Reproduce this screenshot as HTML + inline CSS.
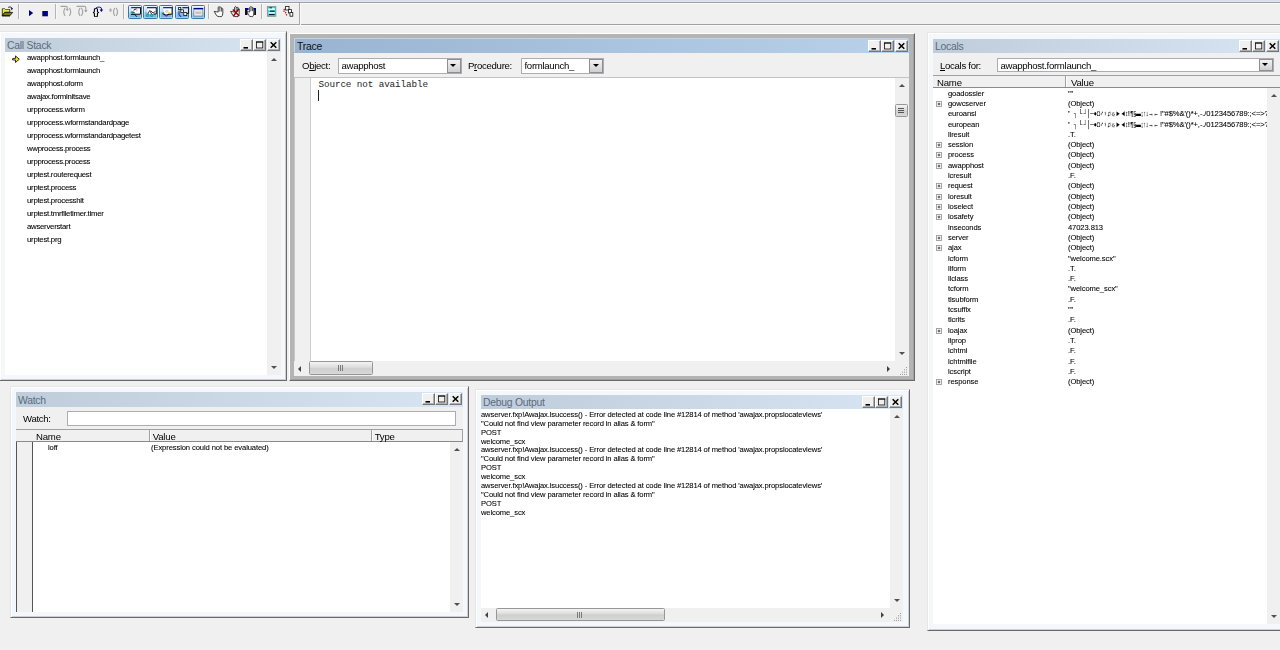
<!DOCTYPE html>
<html lang="en"><head><meta charset="utf-8"><title>Visual FoxPro Debugger</title>
<style>
html,body{margin:0;padding:0}
body{width:1280px;height:650px;overflow:hidden;background:#f0f0f0;position:relative;font-family:"Liberation Sans",sans-serif;font-size:8px;color:#000}
div,span{position:absolute;box-sizing:border-box;white-space:nowrap}
.win{background:#f4f7fc;border-left:1px solid #e6e6e6;border-top:1px solid #e6e6e6;border-right:1px solid #6a6a6a;border-bottom:1px solid #6a6a6a;box-shadow:inset 1px 1px 0 #fff,inset -1px -1px 0 rgba(160,160,160,.45)}
.win.act{background:#b4b4b4;border-left-color:#fff;border-top-color:#fff;box-shadow:inset -1px -1px 0 #a0a0a0}
.tb{height:14px;background:linear-gradient(90deg,#bfcddb,#d7e4f2);color:#5a6b7c;font-size:10.4px;line-height:14px;padding-left:2px;padding-top:1px;letter-spacing:-0.25px}
.act>.tb{background:linear-gradient(90deg,#99b4d1,#b9d1ea);color:#111;box-shadow:-1px -1px 0 #c3d3e6}
.cb{top:1px;width:13px;height:12px;background:#f0f0f0;border-left:1px solid #fff;border-top:1px solid #fff;border-right:1px solid #767676;border-bottom:1px solid #767676;box-shadow:inset -1px -1px 0 #b0b0b0}
.cb svg{position:absolute;left:0;top:0}
.white{background:#fff}
.sb{background:#f0f0f0}
.row{left:0;height:13px;line-height:13px;font-size:7.8px;letter-spacing:-0.27px}
.row,.lrow,.dl,.lbl,.combo,.hdr{will-change:transform}
.row,.lrow,.dl{-webkit-text-stroke:0.08px #000}
.lbl{font-size:9.6px;letter-spacing:-0.3px;line-height:12px}
.combo{background:#fff;border:1px solid #abadb3;font-size:9.6px;line-height:13px;letter-spacing:-0.3px;padding-left:2.5px}
.dd{right:0;top:0;bottom:0;width:14px;background:linear-gradient(#f2f2f2,#cfcfcf);border:1px solid #8e8e8e}
.dd:after{content:"";position:absolute;left:2.5px;top:50%;margin-top:-1.5px;border-left:3.5px solid transparent;border-right:3.5px solid transparent;border-top:3.5px solid #000}
.hdr{background:#f0f0f0;font-size:9.6px;line-height:13px;letter-spacing:-0.2px;border-bottom:1px solid #8a8a8a;border-top:1px solid #a0a0a0}
.hc{top:0;height:11px;border-left:1px solid #fff;border-right:1px solid #a0a0a0;padding-left:4px}
.thumb{background:linear-gradient(#f4f4f4,#dcdcdc 45%,#cfcfcf 55%,#d8d8d8);border:1px solid #979797;border-radius:1.5px}
.grip{left:50%;top:2.5px;width:5px;height:6px;margin-left:-3px;background:linear-gradient(90deg,#7a7a7a 0 1px,transparent 1px 2px,#7a7a7a 2px 3px,transparent 3px 4px,#7a7a7a 4px 5px)}
.au,.ad,.al,.ar{width:0;height:0}
.au{border-left:3px solid transparent;border-right:3px solid transparent;border-bottom:3px solid #505050}
.ad{border-left:3px solid transparent;border-right:3px solid transparent;border-top:3px solid #505050}
.al{border-top:3px solid transparent;border-bottom:3px solid transparent;border-right:3px solid #404040}
.ar{border-top:3px solid transparent;border-bottom:3px solid transparent;border-left:3px solid #404040}
.lrow{left:0;height:10.3px;line-height:10.3px;font-size:7.6px;letter-spacing:-0.1px}
.pms{position:absolute;left:3.4px}
.pm{left:4px;top:2px;width:6px;height:6px;border:1px solid #999;background:#fff}
.pm:before{content:"";position:absolute;left:1px;top:1.5px;width:2px;height:1px;background:#333}
.pm:after{content:"";position:absolute;left:1.5px;top:1px;width:1px;height:2px;background:#333}
.e1{transform:scaleX(.67);transform-origin:0 0}
.e2{letter-spacing:-0.1px}
.dl{left:0.3px;height:9px;line-height:9px;font-size:7.6px;letter-spacing:-0.12px}
.sep{width:1px;top:4px;height:15px;background:#b4b4b4;box-shadow:1px 0 0 #f8f8f8}
.pb{top:5px;width:14.3px;height:14px;border:1px solid #3a75a4;border-radius:1.5px;background:linear-gradient(#dceffa 0,#b6dbf2 48%,#84bfe5 56%,#6db1dd);box-shadow:inset 0 0 0 1px rgba(255,255,255,.35)}
.mw{left:3px;top:2px;width:9px;height:8px;background:#fff;border:1px solid #222;border-left-color:#888;border-top:1px solid #00008b;box-shadow:0 -1px 0 rgba(0,0,139,.35)}
</style></head>
<body>
<div style="left:0;top:0;width:1280px;height:2px;background:linear-gradient(#d6daec,#e6e8f2)"></div>
<div style="left:0;top:2px;width:1280px;height:1px;background:#a0a0a0"></div>
<div style="left:0;top:3px;width:1280px;height:1px;background:#fafafa"></div>
<div style="left:0;top:24px;width:1280px;height:1px;background:#a0a0a0"></div>
<div style="left:0;top:25px;width:1280px;height:1px;background:#fafafa"></div>
<div style="left:299px;top:3px;width:1px;height:22px;background:#a8a8a8"></div>
<div style="left:300px;top:3px;width:1px;height:23px;background:#fafafa"></div>
<div class="sep" style="left:18px"></div>
<div class="sep" style="left:55px"></div>
<div class="sep" style="left:123.2px"></div>
<div class="sep" style="left:208px"></div>
<div class="sep" style="left:261px"></div>
<svg style="position:absolute;left:0;top:3px;will-change:transform" width="300" height="21" viewBox="0 0 300 21">
<!-- open folder -->
<g stroke-linejoin="round">
<path d="M2.3 5.8 H4.8 L5.6 6.6 H9.8 V9.3 H4.8 L2.3 12.5 Z" fill="#ecec00" stroke="#111" stroke-width="0.8"/>
<path d="M2.9 6.5 H4.6 L5.4 7.3 H9.1" fill="none" stroke="#f8f8e0" stroke-width="0.6"/>
<path d="M4.8 9.4 H12.7 L9.9 12.7 H2.2 Z" fill="#7c7c00" stroke="#111" stroke-width="0.8"/>
<path d="M2.1 12.9 H10" stroke="#000" stroke-width="0.9"/>
<path d="M8.2 4.3 Q10.4 3.3 11.8 4.8 L12 6" fill="none" stroke="#111" stroke-width="0.9"/>
<path d="M10.6 5.4 L13 5.2 L11.9 7.3 Z" fill="#111"/>
</g>
<!-- play / stop -->
<path d="M29 7 L33.2 10.1 L29 13.2 Z" fill="#00008b"/>
<rect x="42.3" y="8" width="5.6" height="5.3" fill="#00008b"/>
<!-- step into / over / cursor (gray) -->
<g fill="none" stroke="#a4a4a4" stroke-width="1.15" stroke-linecap="round">
<path d="M61 3.4 H66 Q67.2 3.4 67.2 4.6 V6.4"/>
<path d="M64.9 5.3 Q62.7 9 64.9 12.5 M69.6 5.3 Q71.8 9 69.6 12.5"/>
<path d="M77 3.4 H84.4 Q85.8 3.4 85.8 4.8 V8.4"/>
<path d="M79.9 5.3 Q77.7 9 79.9 12.5 M81.6 5.3 Q83.8 9 81.6 12.5"/>
<path d="M114.6 5.3 Q112.4 9 114.6 12.5 M116.4 5.3 Q118.6 9 116.4 12.5"/>
<path d="M109.4 6.3 L111.6 8 M111.6 6.3 L109.4 8 M110.5 5.8 V8.5" stroke-width="0.8"/>
</g>
<path d="M65.6 6 L68.8 6 L67.2 8.3 Z M84 7 L87.6 7 L85.8 9.4 Z" fill="#a4a4a4"/>
<!-- step out (black + blue arrow) -->
<text x="92.8" y="12.4" font-family="Liberation Sans,sans-serif" font-size="8.6" font-weight="bold" fill="#000" letter-spacing="-0.3">{}</text>
<path d="M95.6 6.2 Q95.8 4.2 97.6 4.2 H99.8 Q101.5 4.2 101.5 6 V7" fill="none" stroke="#1414a4" stroke-width="1"/>
<path d="M99.6 6.6 L103.2 6.6 L101.4 8.9 Z" fill="#00008b"/>
<!-- hand 1 -->
<g fill="#fff" stroke="#111" stroke-width="0.8" stroke-linejoin="round">
<path d="M216.6 8.8 L214.2 8.4 L216.6 12.6 Q217.6 13.6 219.6 13.6 L221.6 13.6 Q222.8 12.6 222.8 10 V5.8 Q222.2 4.8 221.4 5.6 V4.6 Q220.6 3.6 219.8 4.6 V4 Q218.8 3 218.2 4.2 V9 Z"/>
</g>
<path d="M219.8 5 V8.6 M221.4 5.8 V8.6" stroke="#111" stroke-width="0.7" fill="none"/>
<!-- hand 2 with red X -->
<g fill="#fff" stroke="#111" stroke-width="0.8" stroke-linejoin="round">
<path d="M233 8.8 L230.6 8.4 L233 12.6 Q234 13.6 236 13.6 L238 13.6 Q239.2 12.6 239.2 10 V5.8 Q238.6 4.8 237.8 5.6 V4.6 Q237 3.6 236.2 4.6 V4 Q235.2 3 234.6 4.2 V9 Z"/>
</g>
<path d="M236.2 5 V8.6 M237.8 5.8 V8.6" stroke="#111" stroke-width="0.7" fill="none"/>
<path d="M232.8 6.4 L239.2 13 M238.8 6 L233.2 13.2" stroke="#960808" stroke-width="1.5" fill="none"/>
<!-- hands with blue bar -->
<rect x="245" y="5" width="3.6" height="2" fill="#00008b"/>
<rect x="252.4" y="5" width="3.6" height="2" fill="#00008b"/>
<rect x="245" y="7" width="2.4" height="5" fill="#111"/>
<rect x="254.2" y="7" width="1.8" height="5" fill="#111"/>
<g fill="#fff" stroke="#111" stroke-width="0.8" stroke-linejoin="round">
<path d="M248.6 8.8 L246.8 8.6 L248.8 12.4 Q249.6 13.6 251.2 13.6 L252.6 13.6 Q253.8 12.6 253.8 10 V5.6 Q253.2 4.6 252.5 5.4 V4.4 Q251.7 3.4 251 4.4 V4 Q250.2 3.2 249.7 4.4 V9 Z"/>
</g>
<path d="M251 4.8 V8.2 M252.5 5.6 V8.2" stroke="#111" stroke-width="0.7" fill="none"/>
<!-- cyan list icon -->
<rect x="267.3" y="3.5" width="8.6" height="9.8" fill="#00e0e0" stroke="#888" stroke-width="0.7"/>
<rect x="268.4" y="5.2" width="6.4" height="2.2" fill="#fff"/>
<rect x="268.4" y="9.2" width="6.4" height="1.4" fill="#fff"/>
<rect x="269.4" y="4.4" width="2.6" height="0.9" fill="#111"/>
<rect x="270" y="7.6" width="4.6" height="1.1" fill="#111"/>
<rect x="269" y="11" width="5.6" height="1" fill="#111"/>
<!-- assert icon -->
<g fill="#fff" stroke="#111" stroke-width="0.8">
<rect x="285.6" y="3.4" width="3.4" height="3.6"/>
<rect x="288.4" y="6.6" width="3" height="3.4"/>
<rect x="290" y="9.6" width="2.8" height="3.6" />
</g>
<path d="M284.6 5.8 L283.4 7.6 L285.6 9.4 L286 11 L287 12.6" fill="none" stroke="#b01818" stroke-width="1.2" stroke-dasharray="1.4 0.9"/>
</svg>
<div class="pb" style="left:127.7px"></div>
<div class="pb" style="left:143.4px"></div>
<div class="pb" style="left:159.2px"></div>
<div class="pb" style="left:175px"></div>
<div class="pb" style="left:190.9px"></div>
<svg style="position:absolute;left:0;top:0" width="210" height="24" viewBox="0 0 210 24">
<!-- btn1: locals-like window with figure -->
<rect x="131.6" y="8" width="8.9" height="6" fill="#fff"/><path d="M131.2 7.7 H141" stroke="#00008b" stroke-width="1.1"/><path d="M140.5 8 V14.2 H134" stroke="#111" stroke-width="1" fill="none"/>
<path d="M133.6 10.2 L136.4 8.8 M131 14.4 H135 L136.6 16.8 M131.4 12 L134.6 12.6" stroke="#111" stroke-width="1" fill="none"/><rect x="131.6" y="11.6" width="2.2" height="2.2" fill="#008c8c"/><path d="M135.4 9.4 L137.4 9.8 L136.4 11.6" fill="none" stroke="#999" stroke-width="0.6"/>
<!-- btn2: watch window with glasses -->
<rect x="147.4" y="8" width="9" height="6" fill="#fff"/><path d="M147 7.7 H156.8" stroke="#00008b" stroke-width="1.1"/><path d="M156.3 8 V14 H153.5" stroke="#111" stroke-width="1" fill="none"/>
<path d="M147.4 14.6 L149.8 10.4 L151.8 14.6 M151 11 L153 13 L155.4 11.4" stroke="#222" stroke-width="0.9" fill="none"/><circle cx="147.5" cy="15.4" r="1.2" fill="#00d8d8" stroke="#066" stroke-width="0.4"/><circle cx="151.6" cy="15.4" r="1.2" fill="#00d8d8" stroke="#066" stroke-width="0.4"/>
<!-- btn3: window with colored dots -->
<rect x="163.6" y="8" width="8.6" height="6" fill="#fff"/><path d="M163.2 7.7 H172.6" stroke="#00008b" stroke-width="1.1"/><path d="M172.1 8 V14.2 H169" stroke="#111" stroke-width="1" fill="none"/>
<path d="M162.6 13.6 L166.4 15.8 L170 13.2" stroke="#111" stroke-width="1.1" fill="none"/><circle cx="163.4" cy="13.2" r="1" fill="#008c6c"/><circle cx="166.4" cy="15.6" r="1.1" fill="#f000f0"/><circle cx="169.2" cy="12.9" r="1" fill="#e6e600"/><circle cx="166.8" cy="11.2" r="1.3" fill="#e4e4e4" stroke="#aaa" stroke-width="0.4"/>
<!-- btn4: cascade -->
<rect x="182.6" y="8" width="6" height="5.2" fill="#d8ecf8"/><path d="M182.4 7.7 H189" stroke="#00008b" stroke-width="1.1"/><path d="M188.6 8 V13.4 H186.6" stroke="#111" stroke-width="1" fill="none"/>
<g fill="#fff" stroke="#111" stroke-width="0.8"><rect x="178.6" y="7.4" width="2.2" height="2.2"/><rect x="180.8" y="9.8" width="2.6" height="2.6"/><rect x="183.8" y="12.6" width="3" height="3"/></g>
<path d="M179 10.6 V14.4 Q179.4 16.2 181.2 16.6" stroke="#0808a8" stroke-width="0.9" fill="none"/>
<!-- btn5: output window -->
<rect x="193.8" y="9" width="9" height="7" fill="#e9e9e9" stroke="#8c8c8c" stroke-width="0.8"/><path d="M193.6 8.6 H203.2" stroke="#00008b" stroke-width="1.3"/><rect x="195.4" y="11.6" width="5.8" height="2.4" fill="#c4c4c4"/>
</svg>
<div class="win" style="left:-1px;top:31px;width:288px;height:350px"><div class="tb" style="left:5px;top:6px;width:276px;height:14px;line-height:14px">Call Stack<div class="cb" style="left:235px"><svg width="11" height="10" viewBox="0 0 11 10"><rect x="2.5" y="7" width="4.5" height="1.6" fill="#000"/></svg></div><div class="cb" style="left:248px"><svg width="11" height="10" viewBox="0 0 11 10"><rect x="2.4" y="2" width="6.4" height="6" fill="none" stroke="#111" stroke-width="0.85"/><rect x="2" y="1.5" width="7.2" height="1" fill="#111"/></svg></div><div class="cb" style="left:262px"><svg width="11" height="10" viewBox="0 0 11 10"><path d="M2.7 2.2 L8.3 7.8 M8.3 2.2 L2.7 7.8" stroke="#000" stroke-width="1.5" fill="none"/></svg></div></div><div class="white" style="left:5px;top:20px;width:262px;height:323px"><svg style="position:absolute;left:6.5px;top:2.5px" width="8" height="8" viewBox="0 0 8 8"><path d="M0.7 3.4 H3.5 V0.9 L7.3 4.2 L3.5 7.5 V5 H0.7 Z" fill="#f0e800" stroke="#111" stroke-width="0.85" stroke-linejoin="round"/></svg><div class="row" style="left:22px;top:-1.2px">awapphost.formlaunch_</div><div class="row" style="left:22px;top:11.8px">awapphost.formlaunch</div><div class="row" style="left:22px;top:24.8px">awapphost.oform</div><div class="row" style="left:22px;top:37.8px">awajax.forminitsave</div><div class="row" style="left:22px;top:50.8px">urpprocess.wform</div><div class="row" style="left:22px;top:63.8px">urpprocess.wformstandardpage</div><div class="row" style="left:22px;top:76.8px">urpprocess.wformstandardpagetest</div><div class="row" style="left:22px;top:89.8px">wwprocess.process</div><div class="row" style="left:22px;top:102.8px">urpprocess.process</div><div class="row" style="left:22px;top:115.8px">urptest.routerequest</div><div class="row" style="left:22px;top:128.8px">urptest.process</div><div class="row" style="left:22px;top:141.8px">urptest.processhit</div><div class="row" style="left:22px;top:154.8px">urptest.tmrfiletimer.timer</div><div class="row" style="left:22px;top:167.8px">awserverstart</div><div class="row" style="left:22px;top:180.8px">urptest.prg</div></div><div class="sb" style="left:267px;top:20px;width:14px;height:323px"><div class="au" style="left:4px;top:6px"></div><div class="ad" style="left:4px;bottom:6px"></div></div></div>
<div class="win act" style="left:289px;top:33px;width:626px;height:348px"><div class="tb" style="left:5px;top:5px;width:614px;height:14px;line-height:14px">Trace<div class="cb" style="left:573px"><svg width="11" height="10" viewBox="0 0 11 10"><rect x="2.5" y="7" width="4.5" height="1.6" fill="#000"/></svg></div><div class="cb" style="left:586px"><svg width="11" height="10" viewBox="0 0 11 10"><rect x="2.4" y="2" width="6.4" height="6" fill="none" stroke="#111" stroke-width="0.85"/><rect x="2" y="1.5" width="7.2" height="1" fill="#111"/></svg></div><div class="cb" style="left:600px"><svg width="11" height="10" viewBox="0 0 11 10"><path d="M2.7 2.2 L8.3 7.8 M8.3 2.2 L2.7 7.8" stroke="#000" stroke-width="1.5" fill="none"/></svg></div></div><div style="left:4px;top:19px;width:615px;height:323px;background:#f0f0f0"></div><div class="lbl" style="left:11.5px;top:26px">O<u>b</u>ject:</div><div class="combo" style="left:48px;top:24px;width:123.5px;height:15.5px">awapphost<div class="dd"></div></div><div class="lbl" style="left:178px;top:26px">P<u>r</u>ocedure:</div><div class="combo" style="left:231px;top:24px;width:83px;height:15.5px">formlaunch_<div class="dd"></div></div><div style="left:4px;top:43px;width:615px;height:1px;background:#c4c4c4"></div><div style="left:4px;top:43px;width:1px;height:284px;background:#c6c6c6"></div><div class="white" style="left:20px;top:44px;width:585px;height:283px;border-left:1px solid #cdcdcd"><div style="left:7.5px;top:1.5px;font-family:'Liberation Mono',monospace;font-size:9.3px;line-height:10px;letter-spacing:-0.11px;color:#262626">Source not available</div><div style="left:7px;top:11.5px;width:1px;height:11px;background:#222"></div></div><div class="sb" style="left:605px;top:44px;width:14px;height:283px"><div class="au" style="left:4px;top:6px"></div><div class="ad" style="left:4px;bottom:6px"></div><div class="thumb" style="left:0;top:26px;width:12.5px;height:12.5px"><div style="left:2px;top:2.5px;width:6px;height:5px;background:linear-gradient(#555 0 1px,transparent 1px 2px,#555 2px 3px,transparent 3px 4px,#555 4px 5px)"></div></div></div><div class="sb" style="left:4px;top:327px;width:615px;height:15px"><div class="al" style="left:4px;top:4.5px"></div><div class="ar" style="right:19px;top:4.5px"></div><div class="thumb" style="left:15px;top:0;width:63.5px;height:14px"><div class="grip"></div></div><svg style="position:absolute;right:1px;bottom:1px" width="8" height="8" viewBox="0 0 8 8"><g fill="#999"><rect x="6" y="0" width="1" height="1"/><rect x="4" y="2.3" width="1" height="1"/><rect x="6" y="2.3" width="1" height="1"/><rect x="2" y="4.6" width="1" height="1"/><rect x="4" y="4.6" width="1" height="1"/><rect x="6" y="4.6" width="1" height="1"/><rect x="0" y="6.9" width="1" height="1"/><rect x="2" y="6.9" width="1" height="1"/><rect x="4" y="6.9" width="1" height="1"/><rect x="6" y="6.9" width="1" height="1"/></g></svg></div></div>
<div class="win" style="left:927px;top:32px;width:373px;height:599px"><div class="tb" style="left:5px;top:6px;width:347px;height:14px;line-height:14px">Locals<div class="cb" style="left:306px"><svg width="11" height="10" viewBox="0 0 11 10"><rect x="2.5" y="7" width="4.5" height="1.6" fill="#000"/></svg></div><div class="cb" style="left:319px"><svg width="11" height="10" viewBox="0 0 11 10"><rect x="2.4" y="2" width="6.4" height="6" fill="none" stroke="#111" stroke-width="0.85"/><rect x="2" y="1.5" width="7.2" height="1" fill="#111"/></svg></div><div class="cb" style="left:333px"><svg width="11" height="10" viewBox="0 0 11 10"><path d="M2.7 2.2 L8.3 7.8 M8.3 2.2 L2.7 7.8" stroke="#000" stroke-width="1.5" fill="none"/></svg></div></div><div style="left:5px;top:20px;width:360px;height:36px;background:#f0f0f0"></div><div class="lbl" style="left:12px;top:27px"><u>L</u>ocals for:</div><div class="combo" style="left:69px;top:25px;width:276.5px;height:13.5px">awapphost.formlaunch_<div class="dd"></div></div><div class="hdr" style="left:5px;top:42px;width:360px;height:13px"><div class="hc" style="left:0;width:133px;border-left:0">Name</div><div class="hc" style="left:133px;width:300px">Value</div></div><div class="white" style="left:5px;top:55px;width:334px;height:536px;overflow:hidden"><div class="lrow" style="left:14.5px;top:0.6px">goadossier</div><div class="lrow" style="left:135px;top:0.6px">&quot;&quot;</div><svg class="pms" style="top:12.71px" width="7" height="7" viewBox="0 0 7 7"><rect x="0.5" y="0.5" width="5" height="5" fill="#fff" stroke="#9c9c9c" stroke-width="0.9"/><path d="M1.6 3 H4.4 M3 1.6 V4.4" stroke="#333" stroke-width="0.9"/></svg><div class="lrow" style="left:14.5px;top:10.91px">gowcserver</div><div class="lrow" style="left:135px;top:10.91px">(Object)</div><div class="lrow" style="left:14.5px;top:21.22px">euroansi</div><div class="lrow e1" style="left:135px;top:21.22px">"&nbsp; &nbsp;┐ └ ┘│─●◘♂♀♫☼►◄↕‼¶§▬↨↑↓→←</div><div class="lrow e2" style="left:227px;top:21.22px">!"#$%&amp;'()*+,-./0123456789:;&lt;=&gt;?</div><div class="lrow" style="left:14.5px;top:31.53px">european</div><div class="lrow e1" style="left:135px;top:31.53px">"&nbsp; &nbsp;┐ └ ┘│─●◘♂♀♫☼►◄↕‼¶§▬↨↑↓→←</div><div class="lrow e2" style="left:227px;top:31.53px">!"#$%&amp;'()*+,-./0123456789:;&lt;=&gt;?</div><div class="lrow" style="left:14.5px;top:41.84px">llresult</div><div class="lrow" style="left:135px;top:41.84px">.T.</div><svg class="pms" style="top:53.95px" width="7" height="7" viewBox="0 0 7 7"><rect x="0.5" y="0.5" width="5" height="5" fill="#fff" stroke="#9c9c9c" stroke-width="0.9"/><path d="M1.6 3 H4.4 M3 1.6 V4.4" stroke="#333" stroke-width="0.9"/></svg><div class="lrow" style="left:14.5px;top:52.15px">session</div><div class="lrow" style="left:135px;top:52.15px">(Object)</div><svg class="pms" style="top:64.26px" width="7" height="7" viewBox="0 0 7 7"><rect x="0.5" y="0.5" width="5" height="5" fill="#fff" stroke="#9c9c9c" stroke-width="0.9"/><path d="M1.6 3 H4.4 M3 1.6 V4.4" stroke="#333" stroke-width="0.9"/></svg><div class="lrow" style="left:14.5px;top:62.46px">process</div><div class="lrow" style="left:135px;top:62.46px">(Object)</div><svg class="pms" style="top:74.57px" width="7" height="7" viewBox="0 0 7 7"><rect x="0.5" y="0.5" width="5" height="5" fill="#fff" stroke="#9c9c9c" stroke-width="0.9"/><path d="M1.6 3 H4.4 M3 1.6 V4.4" stroke="#333" stroke-width="0.9"/></svg><div class="lrow" style="left:14.5px;top:72.77px">awapphost</div><div class="lrow" style="left:135px;top:72.77px">(Object)</div><div class="lrow" style="left:14.5px;top:83.08px">lcresult</div><div class="lrow" style="left:135px;top:83.08px">.F.</div><svg class="pms" style="top:95.19px" width="7" height="7" viewBox="0 0 7 7"><rect x="0.5" y="0.5" width="5" height="5" fill="#fff" stroke="#9c9c9c" stroke-width="0.9"/><path d="M1.6 3 H4.4 M3 1.6 V4.4" stroke="#333" stroke-width="0.9"/></svg><div class="lrow" style="left:14.5px;top:93.39px">request</div><div class="lrow" style="left:135px;top:93.39px">(Object)</div><svg class="pms" style="top:105.5px" width="7" height="7" viewBox="0 0 7 7"><rect x="0.5" y="0.5" width="5" height="5" fill="#fff" stroke="#9c9c9c" stroke-width="0.9"/><path d="M1.6 3 H4.4 M3 1.6 V4.4" stroke="#333" stroke-width="0.9"/></svg><div class="lrow" style="left:14.5px;top:103.7px">loresult</div><div class="lrow" style="left:135px;top:103.7px">(Object)</div><svg class="pms" style="top:115.81px" width="7" height="7" viewBox="0 0 7 7"><rect x="0.5" y="0.5" width="5" height="5" fill="#fff" stroke="#9c9c9c" stroke-width="0.9"/><path d="M1.6 3 H4.4 M3 1.6 V4.4" stroke="#333" stroke-width="0.9"/></svg><div class="lrow" style="left:14.5px;top:114.01px">loselect</div><div class="lrow" style="left:135px;top:114.01px">(Object)</div><svg class="pms" style="top:126.12px" width="7" height="7" viewBox="0 0 7 7"><rect x="0.5" y="0.5" width="5" height="5" fill="#fff" stroke="#9c9c9c" stroke-width="0.9"/><path d="M1.6 3 H4.4 M3 1.6 V4.4" stroke="#333" stroke-width="0.9"/></svg><div class="lrow" style="left:14.5px;top:124.32px">losafety</div><div class="lrow" style="left:135px;top:124.32px">(Object)</div><div class="lrow" style="left:14.5px;top:134.63px">lnseconds</div><div class="lrow" style="left:135px;top:134.63px">47023.813</div><svg class="pms" style="top:146.74px" width="7" height="7" viewBox="0 0 7 7"><rect x="0.5" y="0.5" width="5" height="5" fill="#fff" stroke="#9c9c9c" stroke-width="0.9"/><path d="M1.6 3 H4.4 M3 1.6 V4.4" stroke="#333" stroke-width="0.9"/></svg><div class="lrow" style="left:14.5px;top:144.94px">server</div><div class="lrow" style="left:135px;top:144.94px">(Object)</div><svg class="pms" style="top:157.05px" width="7" height="7" viewBox="0 0 7 7"><rect x="0.5" y="0.5" width="5" height="5" fill="#fff" stroke="#9c9c9c" stroke-width="0.9"/><path d="M1.6 3 H4.4 M3 1.6 V4.4" stroke="#333" stroke-width="0.9"/></svg><div class="lrow" style="left:14.5px;top:155.25px">ajax</div><div class="lrow" style="left:135px;top:155.25px">(Object)</div><div class="lrow" style="left:14.5px;top:165.56px">lcform</div><div class="lrow" style="left:135px;top:165.56px">&quot;welcome.scx&quot;</div><div class="lrow" style="left:14.5px;top:175.87px">llform</div><div class="lrow" style="left:135px;top:175.87px">.T.</div><div class="lrow" style="left:14.5px;top:186.18px">llclass</div><div class="lrow" style="left:135px;top:186.18px">.F.</div><div class="lrow" style="left:14.5px;top:196.49px">tcform</div><div class="lrow" style="left:135px;top:196.49px">&quot;welcome_scx&quot;</div><div class="lrow" style="left:14.5px;top:206.8px">tlsubform</div><div class="lrow" style="left:135px;top:206.8px">.F.</div><div class="lrow" style="left:14.5px;top:217.11px">tcsuffix</div><div class="lrow" style="left:135px;top:217.11px">&quot;&quot;</div><div class="lrow" style="left:14.5px;top:227.42px">tlcrits</div><div class="lrow" style="left:135px;top:227.42px">.F.</div><svg class="pms" style="top:239.53px" width="7" height="7" viewBox="0 0 7 7"><rect x="0.5" y="0.5" width="5" height="5" fill="#fff" stroke="#9c9c9c" stroke-width="0.9"/><path d="M1.6 3 H4.4 M3 1.6 V4.4" stroke="#333" stroke-width="0.9"/></svg><div class="lrow" style="left:14.5px;top:237.73px">loajax</div><div class="lrow" style="left:135px;top:237.73px">(Object)</div><div class="lrow" style="left:14.5px;top:248.04px">llprop</div><div class="lrow" style="left:135px;top:248.04px">.T.</div><div class="lrow" style="left:14.5px;top:258.35px">lchtml</div><div class="lrow" style="left:135px;top:258.35px">.F.</div><div class="lrow" style="left:14.5px;top:268.66px">lchtmlfile</div><div class="lrow" style="left:135px;top:268.66px">.F.</div><div class="lrow" style="left:14.5px;top:278.97px">lcscript</div><div class="lrow" style="left:135px;top:278.97px">.F.</div><svg class="pms" style="top:291.08px" width="7" height="7" viewBox="0 0 7 7"><rect x="0.5" y="0.5" width="5" height="5" fill="#fff" stroke="#9c9c9c" stroke-width="0.9"/><path d="M1.6 3 H4.4 M3 1.6 V4.4" stroke="#333" stroke-width="0.9"/></svg><div class="lrow" style="left:14.5px;top:289.28px">response</div><div class="lrow" style="left:135px;top:289.28px">(Object)</div></div><div class="sb" style="left:339px;top:55px;width:14px;height:536px"><div class="au" style="left:4px;top:6px"></div><div class="ad" style="left:4px;bottom:6px"></div></div></div>
<div class="win" style="left:10px;top:386px;width:459px;height:232px"><div class="tb" style="left:5px;top:5px;width:447px;height:15px;line-height:15px">Watch<div class="cb" style="left:406px"><svg width="11" height="10" viewBox="0 0 11 10"><rect x="2.5" y="7" width="4.5" height="1.6" fill="#000"/></svg></div><div class="cb" style="left:419px"><svg width="11" height="10" viewBox="0 0 11 10"><rect x="2.4" y="2" width="6.4" height="6" fill="none" stroke="#111" stroke-width="0.85"/><rect x="2" y="1.5" width="7.2" height="1" fill="#111"/></svg></div><div class="cb" style="left:433px"><svg width="11" height="10" viewBox="0 0 11 10"><path d="M2.7 2.2 L8.3 7.8 M8.3 2.2 L2.7 7.8" stroke="#000" stroke-width="1.5" fill="none"/></svg></div></div><div style="left:5px;top:20px;width:447px;height:36px;background:#f0f0f0"></div><div class="lbl" style="left:11.5px;top:26px">Watch:</div><div class="combo" style="left:56px;top:24px;width:389px;height:14.5px"></div><div class="hdr" style="left:5px;top:42px;width:447px;height:13px"><div class="hc" style="left:0;width:133.7px;border-left:0;padding-left:20px">Name</div><div class="hc" style="left:133.7px;width:222px;padding-left:2px">Value</div><div class="hc" style="left:355.7px;width:91.3px;padding-left:2px">Type</div></div><div class="white" style="left:5px;top:55px;width:434px;height:170px;border-left:1px solid #555"><div style="left:0;top:0;width:16px;height:100%;background:#f0f0f0;border-right:1px solid #555"></div><div class="lrow" style="left:31px;top:0.5px">loff</div><div class="lrow" style="left:134px;top:0.5px">(Expression could not be evaluated)</div></div><div class="sb" style="left:439px;top:55px;width:13px;height:170px"><div class="au" style="left:3.5px;top:6px"></div><div class="ad" style="left:3.5px;bottom:6px"></div></div></div>
<div class="win" style="left:475px;top:389px;width:435px;height:239px"><div class="tb" style="left:5px;top:5px;width:422px;height:14px;line-height:14px">Debug Output<div class="cb" style="left:381px"><svg width="11" height="10" viewBox="0 0 11 10"><rect x="2.5" y="7" width="4.5" height="1.6" fill="#000"/></svg></div><div class="cb" style="left:394px"><svg width="11" height="10" viewBox="0 0 11 10"><rect x="2.4" y="2" width="6.4" height="6" fill="none" stroke="#111" stroke-width="0.85"/><rect x="2" y="1.5" width="7.2" height="1" fill="#111"/></svg></div><div class="cb" style="left:408px"><svg width="11" height="10" viewBox="0 0 11 10"><path d="M2.7 2.2 L8.3 7.8 M8.3 2.2 L2.7 7.8" stroke="#000" stroke-width="1.5" fill="none"/></svg></div></div><div class="white" style="left:5px;top:19px;width:409px;height:199px"><div class="dl" style="top:0.6px">awserver.fxp!Awajax.lsuccess() - Error detected at code line #12814 of method 'awajax.propslocateviews'</div><div class="dl" style="top:9.57px">"Could not find view parameter record in alias &amp; form"</div><div class="dl" style="top:18.54px">POST</div><div class="dl" style="top:27.51px">welcome_scx</div><div class="dl" style="top:36.48px">awserver.fxp!Awajax.lsuccess() - Error detected at code line #12814 of method 'awajax.propslocateviews'</div><div class="dl" style="top:45.45px">"Could not find view parameter record in alias &amp; form"</div><div class="dl" style="top:54.42px">POST</div><div class="dl" style="top:63.39px">welcome_scx</div><div class="dl" style="top:72.36px">awserver.fxp!Awajax.lsuccess() - Error detected at code line #12814 of method 'awajax.propslocateviews'</div><div class="dl" style="top:81.33px">"Could not find view parameter record in alias &amp; form"</div><div class="dl" style="top:90.3px">POST</div><div class="dl" style="top:99.27px">welcome_scx</div></div><div class="sb" style="left:414px;top:19px;width:13px;height:199px"><div class="au" style="left:3.5px;top:6px"></div><div class="ad" style="left:3.5px;bottom:6px"></div></div><div class="sb" style="left:5px;top:218px;width:422px;height:13.8px"><div class="al" style="left:4px;top:3.9px"></div><div class="ar" style="right:19px;top:3.9px"></div><div class="thumb" style="left:14.5px;top:0;width:169.5px;height:12.8px"><div class="grip"></div></div><svg style="position:absolute;right:1px;bottom:1px" width="8" height="8" viewBox="0 0 8 8"><g fill="#999"><rect x="6" y="0" width="1" height="1"/><rect x="4" y="2.3" width="1" height="1"/><rect x="6" y="2.3" width="1" height="1"/><rect x="2" y="4.6" width="1" height="1"/><rect x="4" y="4.6" width="1" height="1"/><rect x="6" y="4.6" width="1" height="1"/><rect x="0" y="6.9" width="1" height="1"/><rect x="2" y="6.9" width="1" height="1"/><rect x="4" y="6.9" width="1" height="1"/><rect x="6" y="6.9" width="1" height="1"/></g></svg></div></div>
</body></html>
